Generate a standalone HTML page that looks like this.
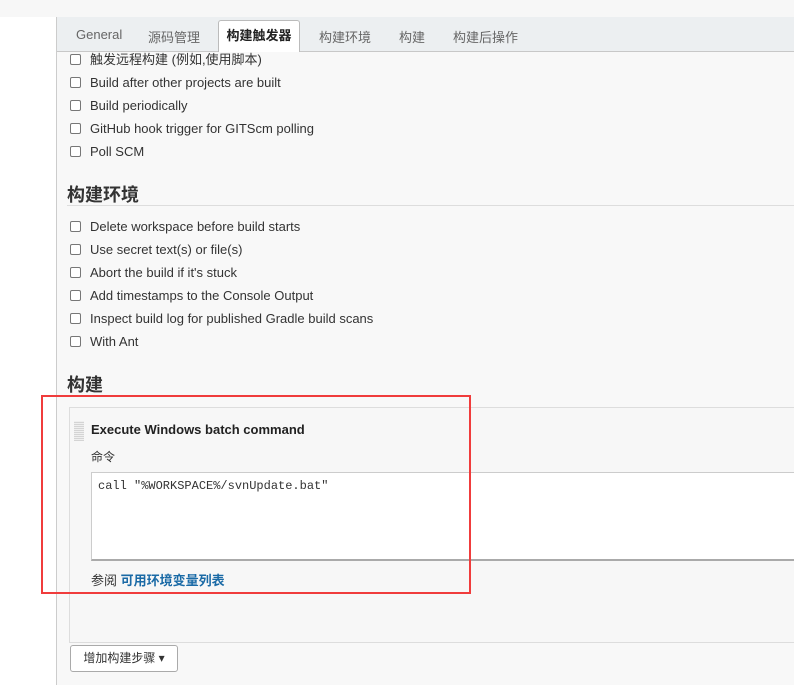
<!DOCTYPE html><html><head><meta charset="utf-8"><style>
body{margin:0;width:794px;height:685px;overflow:hidden;background:#fff;font-family:"Liberation Sans","Noto Sans CJK SC",sans-serif;font-size:13px;color:#333;position:relative}
.top{position:absolute;left:0;top:0;width:794px;height:17px;background:#f7f7f7}
.main{position:absolute;left:56px;top:17px;width:738px;height:668px;background:#f8f8f8;border-left:1px solid #ccc}
.tabs{position:absolute;left:0;top:0;width:738px;height:34px;background:#eceff1;border-bottom:1px solid #c8c8c8}
.tab{position:absolute;top:10px;color:#666;font-size:13px;white-space:nowrap}
.tab.act{top:3px;height:32px;background:#fff;border:1px solid #bbb;border-bottom:none;border-radius:3px 3px 0 0;color:#222;font-weight:bold;line-height:30px;padding:0;text-align:center;box-sizing:border-box;width:82px;left:161px}
.cb{position:absolute;left:13px;font-size:13px;color:#333;line-height:16px;white-space:nowrap}
.cb:before{content:"";position:absolute;left:0;top:2px;width:9px;height:9px;border:1px solid #777;border-radius:2px;background:#fff}
.cb span{margin-left:20px}
h2{position:absolute;left:10px;margin:0;font-size:18px;font-weight:bold;color:#333}
.line{position:absolute;left:10px;right:0;height:1px;background:#ddd}
</style></head><body>
<div class="top"></div>
<div class="main">
<div class="tabs">
<span class="tab" style="left:19px">General</span>
<span class="tab" style="left:91px">源码管理</span>
<div class="tab act">构建触发器</div>
<span class="tab" style="left:262px">构建环境</span>
<span class="tab" style="left:342px">构建</span>
<span class="tab" style="left:396px">构建后操作</span>
</div>
<div class="cb" style="top:35px"><span>触发远程构建 (例如,使用脚本)</span></div>
<div class="cb" style="top:58px"><span>Build after other projects are built</span></div>
<div class="cb" style="top:81px"><span>Build periodically</span></div>
<div class="cb" style="top:104px"><span>GitHub hook trigger for GITScm polling</span></div>
<div class="cb" style="top:127px"><span>Poll SCM</span></div>
<h2 style="top:164px">构建环境</h2><div class="line" style="top:188px"></div>
<div class="cb" style="top:202px"><span>Delete workspace before build starts</span></div>
<div class="cb" style="top:225px"><span>Use secret text(s) or file(s)</span></div>
<div class="cb" style="top:248px"><span>Abort the build if it's stuck</span></div>
<div class="cb" style="top:271px"><span>Add timestamps to the Console Output</span></div>
<div class="cb" style="top:294px"><span>Inspect build log for published Gradle build scans</span></div>
<div class="cb" style="top:317px"><span>With Ant</span></div>
<h2 style="top:354px">构建</h2>
<div style="position:absolute;left:12px;top:390px;width:730px;height:234px;border:1px solid #ddd;background:#f7f7f7"></div>
<div style="position:absolute;left:17px;top:404px;width:10px;height:20px;background:repeating-linear-gradient(0deg,#ccc 0 1px,transparent 1px 2px),#eee;opacity:.8"></div>
<div style="position:absolute;left:34px;top:405px;font-weight:bold;font-size:13px;color:#222">Execute Windows batch command</div>
<div style="position:absolute;left:34px;top:431px;font-size:12px;color:#333">命令</div>
<div style="position:absolute;left:34px;top:455px;width:710px;height:86px;background:#fff;border:1px solid #ccc;border-bottom:2px solid #aaa"></div>
<div style="position:absolute;left:41px;top:462px;font-family:'Liberation Mono','Noto Sans CJK SC',monospace;font-size:12px;color:#333">call ″%WORKSPACE%/svnUpdate.bat″</div>
<div style="position:absolute;left:34px;top:553px;font-size:13px"><span style="color:#333">参阅</span> <b style="color:#1a6aa6">可用环境变量列表</b></div>
<div style="position:absolute;left:13px;top:628px;width:108px;height:27px;border:1px solid #aaa;border-radius:3px;background:#fff;box-sizing:border-box;font-size:12px;line-height:25px;text-align:center;color:#333">增加构建步骤 ▾</div>
</div>
<div style="position:absolute;left:41px;top:395px;width:426px;height:195px;border:2px solid #f03c3c"></div>
</body></html>
